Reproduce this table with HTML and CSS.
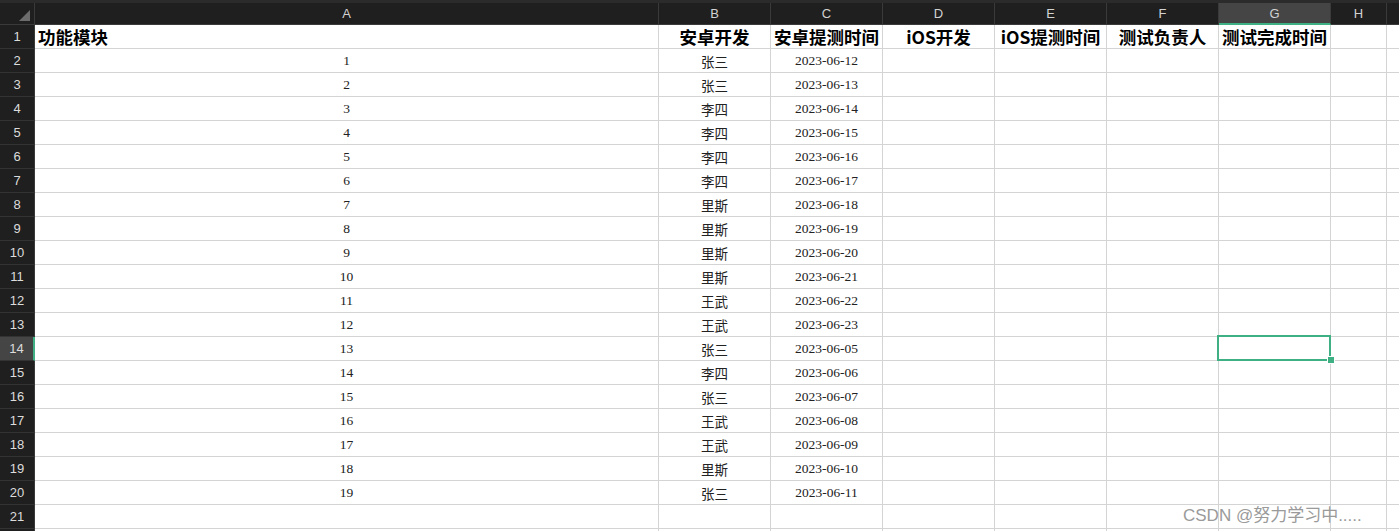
FILE: index.html
```html
<!DOCTYPE html>
<html lang="zh">
<head>
<meta charset="utf-8">
<link rel="stylesheet" href="styles.css">
</head>
<body>
<div class="sheet">
  <div class="strip"></div>
  <div class="row colhead">
    <div class="corner"><span class="tri"></span></div>
    <div class="ch">A</div><div class="ch">B</div><div class="ch">C</div><div class="ch">D</div><div class="ch">E</div><div class="ch">F</div><div class="ch ch-sel">G</div><div class="ch">H</div><div class="ch"></div>
  </div>
  <div class="row title">
    <div class="rh">1</div>
    <div class="c left">功能模块</div><div class="c">安卓开发</div><div class="c">安卓提测时间</div><div class="c">iOS开发</div><div class="c">iOS提测时间</div><div class="c">测试负责人</div><div class="c">测试完成时间</div><div class="c"></div><div class="c"></div>
  </div>
  <div class="row"><div class="rh">2</div><div class="c">1</div><div class="c">张三</div><div class="c">2023-06-12</div><div class="c"></div><div class="c"></div><div class="c"></div><div class="c"></div><div class="c"></div><div class="c"></div></div>
  <div class="row"><div class="rh">3</div><div class="c">2</div><div class="c">张三</div><div class="c">2023-06-13</div><div class="c"></div><div class="c"></div><div class="c"></div><div class="c"></div><div class="c"></div><div class="c"></div></div>
  <div class="row"><div class="rh">4</div><div class="c">3</div><div class="c">李四</div><div class="c">2023-06-14</div><div class="c"></div><div class="c"></div><div class="c"></div><div class="c"></div><div class="c"></div><div class="c"></div></div>
  <div class="row"><div class="rh">5</div><div class="c">4</div><div class="c">李四</div><div class="c">2023-06-15</div><div class="c"></div><div class="c"></div><div class="c"></div><div class="c"></div><div class="c"></div><div class="c"></div></div>
  <div class="row"><div class="rh">6</div><div class="c">5</div><div class="c">李四</div><div class="c">2023-06-16</div><div class="c"></div><div class="c"></div><div class="c"></div><div class="c"></div><div class="c"></div><div class="c"></div></div>
  <div class="row"><div class="rh">7</div><div class="c">6</div><div class="c">李四</div><div class="c">2023-06-17</div><div class="c"></div><div class="c"></div><div class="c"></div><div class="c"></div><div class="c"></div><div class="c"></div></div>
  <div class="row"><div class="rh">8</div><div class="c">7</div><div class="c">里斯</div><div class="c">2023-06-18</div><div class="c"></div><div class="c"></div><div class="c"></div><div class="c"></div><div class="c"></div><div class="c"></div></div>
  <div class="row"><div class="rh">9</div><div class="c">8</div><div class="c">里斯</div><div class="c">2023-06-19</div><div class="c"></div><div class="c"></div><div class="c"></div><div class="c"></div><div class="c"></div><div class="c"></div></div>
  <div class="row"><div class="rh">10</div><div class="c">9</div><div class="c">里斯</div><div class="c">2023-06-20</div><div class="c"></div><div class="c"></div><div class="c"></div><div class="c"></div><div class="c"></div><div class="c"></div></div>
  <div class="row"><div class="rh">11</div><div class="c">10</div><div class="c">里斯</div><div class="c">2023-06-21</div><div class="c"></div><div class="c"></div><div class="c"></div><div class="c"></div><div class="c"></div><div class="c"></div></div>
  <div class="row"><div class="rh">12</div><div class="c">11</div><div class="c">王武</div><div class="c">2023-06-22</div><div class="c"></div><div class="c"></div><div class="c"></div><div class="c"></div><div class="c"></div><div class="c"></div></div>
  <div class="row"><div class="rh">13</div><div class="c">12</div><div class="c">王武</div><div class="c">2023-06-23</div><div class="c"></div><div class="c"></div><div class="c"></div><div class="c"></div><div class="c"></div><div class="c"></div></div>
  <div class="row"><div class="rh rh-sel">14</div><div class="c">13</div><div class="c">张三</div><div class="c">2023-06-05</div><div class="c"></div><div class="c"></div><div class="c"></div><div class="c"></div><div class="c"></div><div class="c"></div></div>
  <div class="row"><div class="rh">15</div><div class="c">14</div><div class="c">李四</div><div class="c">2023-06-06</div><div class="c"></div><div class="c"></div><div class="c"></div><div class="c"></div><div class="c"></div><div class="c"></div></div>
  <div class="row"><div class="rh">16</div><div class="c">15</div><div class="c">张三</div><div class="c">2023-06-07</div><div class="c"></div><div class="c"></div><div class="c"></div><div class="c"></div><div class="c"></div><div class="c"></div></div>
  <div class="row"><div class="rh">17</div><div class="c">16</div><div class="c">王武</div><div class="c">2023-06-08</div><div class="c"></div><div class="c"></div><div class="c"></div><div class="c"></div><div class="c"></div><div class="c"></div></div>
  <div class="row"><div class="rh">18</div><div class="c">17</div><div class="c">王武</div><div class="c">2023-06-09</div><div class="c"></div><div class="c"></div><div class="c"></div><div class="c"></div><div class="c"></div><div class="c"></div></div>
  <div class="row"><div class="rh">19</div><div class="c">18</div><div class="c">里斯</div><div class="c">2023-06-10</div><div class="c"></div><div class="c"></div><div class="c"></div><div class="c"></div><div class="c"></div><div class="c"></div></div>
  <div class="row"><div class="rh">20</div><div class="c">19</div><div class="c">张三</div><div class="c">2023-06-11</div><div class="c"></div><div class="c"></div><div class="c"></div><div class="c"></div><div class="c"></div><div class="c"></div></div>
  <div class="row"><div class="rh">21</div><div class="c"></div><div class="c"></div><div class="c"></div><div class="c"></div><div class="c"></div><div class="c"></div><div class="c"></div><div class="c"></div><div class="c"></div></div>
  <div class="row"><div class="rh">22</div><div class="c"></div><div class="c"></div><div class="c"></div><div class="c"></div><div class="c"></div><div class="c"></div><div class="c"></div><div class="c"></div><div class="c"></div></div>

  <div class="selection"></div>
  <div class="handle"></div>
  <div class="watermark">CSDN @努力学习中.....</div>
</div>
</body>
</html>
```

FILE: styles.css
```css
html, body {
  margin: 0;
  padding: 0;
  background: #ffffff;
  overflow: hidden;
}
.sheet {
  position: relative;
  width: 1399px;
  height: 531px;
  overflow: hidden;
  font-family: "Liberation Serif", "Noto Sans CJK SC", serif;
}
.strip {
  height: 3px;
  background: #2b2b2b;
}
.row {
  display: grid;
  grid-template-columns: 35px 624px 112px 112px 112px 112px 112px 112px 56px 112px;
  height: 24px;
}
.colhead {
  height: 22px;
  background: #1f1f1f;
}
.corner {
  position: relative;
  background: #1f1f1f;
  border-right: 1px solid #3a3a3a;
  border-bottom: 1px solid #3a3a3a;
}
.tri {
  position: absolute;
  left: 19px;
  top: 7px;
  width: 0;
  height: 0;
  border-left: 11px solid transparent;
  border-bottom: 11px solid #6c6c6c;
}
.ch {
  box-sizing: border-box;
  border-right: 1px solid #3a3a3a;
  border-bottom: 1px solid #3a3a3a;
  color: #d2d2d2;
  font-family: "Liberation Sans", "Noto Sans", sans-serif;
  font-size: 13px;
  display: flex;
  align-items: center;
  justify-content: center;
}
.ch-sel {
  background: #454545;
  border-bottom: 2px solid #3fb084;
}
.rh {
  box-sizing: border-box;
  background: #1f1f1f;
  border-right: 1px solid #3a3a3a;
  border-bottom: 1px solid #333333;
  color: #dcdcdc;
  font-family: "Liberation Sans", "Noto Sans", sans-serif;
  font-size: 13px;
  display: flex;
  align-items: center;
  justify-content: center;
}
.rh-sel {
  background: #454545;
  border-right: 2px solid #3fb084;
}
.c {
  box-sizing: border-box;
  border-right: 1px solid #d4d4d4;
  border-bottom: 1px solid #d4d4d4;
  color: #222222;
  font-size: 13.5px;
  display: flex;
  align-items: center;
  justify-content: center;
  white-space: nowrap;
  overflow: hidden;
}
.title .c {
  font-family: "Noto Sans CJK SC", "Noto Sans", sans-serif;
  font-weight: 700;
  font-size: 17.5px;
  line-height: 18px;
  color: #000000;
  overflow: visible;
}
.title .left {
  justify-content: flex-start;
  padding-left: 3px;
}
.selection {
  position: absolute;
  left: 1217px;
  top: 335px;
  width: 110px;
  height: 22px;
  border: 2px solid #3fb084;
}
.handle {
  position: absolute;
  left: 1328px;
  top: 357px;
  width: 6px;
  height: 6px;
  background: #3fb084;
  border: 1px solid #ffffff;
  box-sizing: content-box;
  margin: -1px 0 0 -1px;
}
.watermark {
  position: absolute;
  left: 1183px;
  top: 501px;
  font-family: "Liberation Sans", "Noto Sans CJK SC", sans-serif;
  font-size: 17px;
  color: #9a9a9a;
  text-shadow: 0 0 1px #ffffff;
  white-space: nowrap;
}
```
